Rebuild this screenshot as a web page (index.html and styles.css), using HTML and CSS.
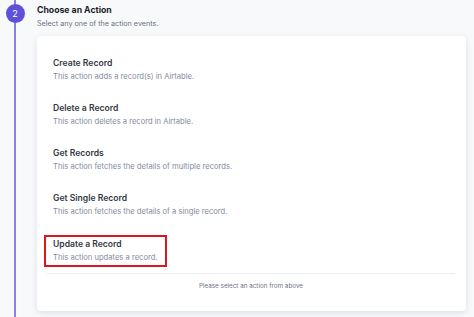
FILE: index.html
```html
<!DOCTYPE html>
<html>
<head>
<meta charset="utf-8">
<link rel="stylesheet" href="styles.css">
</head>
<body>
<div class="step">
  <div class="rail"><div class="badge">2</div></div>
  <div class="content">
    <h2 class="heading">Choose an Action</h2>
    <p class="sub">Select any one of the action events.</p>
    <div class="card">
      <ul class="actions">
        <li class="action"><span class="a-title">Create Record</span><span class="a-desc">This action adds a record(s) in Airtable.</span></li>
        <li class="action"><span class="a-title">Delete a Record</span><span class="a-desc">This action deletes a record in Airtable.</span></li>
        <li class="action"><span class="a-title">Get Records</span><span class="a-desc">This action fetches the details of multiple records.</span></li>
        <li class="action"><span class="a-title">Get Single Record</span><span class="a-desc">This action fetches the details of a single record.</span></li>
        <li class="action selected"><span class="a-title">Update a Record</span><span class="a-desc">This action updates a record.</span></li>
      </ul>
      <div class="footer">Please select an action from above</div>
    </div>
  </div>
</div>
</body>
</html>
```

FILE: styles.css
```css
html, body {
  margin: 0;
  padding: 0;
  background: #f8f9fb;
  font-family: Inter, "Noto Sans", sans-serif;
}
.step {
  display: flex;
  min-height: 317px;
}
.rail {
  width: 30px;
  flex: none;
  display: flex;
  flex-direction: column;
  align-items: center;
  background: linear-gradient(#8c80e4, #8c80e4) center / 2px 100% no-repeat;
}
.badge {
  margin-top: 4px;
  width: 19px;
  height: 19px;
  border-radius: 50%;
  background: #5f50d8;
  color: #fff;
  font-size: 9px;
  line-height: 19px;
  text-align: center;
}
.content {
  flex: 1;
  margin-left: 7px;
  margin-right: 8px;
}
.heading {
  margin: 4px 0 0;
  font-size: 8.7px;
  line-height: 13px;
  font-weight: 700;
  color: #1a1e28;
}
.sub {
  margin: 1px 0 0;
  font-size: 7.2px;
  line-height: 12px;
  color: #6b7080;
}
.card {
  margin-top: 6px;
  background: #fff;
  border-radius: 4px;
  box-shadow: 0 2px 6px rgba(30, 40, 60, 0.12);
}
.actions {
  list-style: none;
  margin: 0;
  padding: 17.5px 7px 6px;
  display: flex;
  flex-direction: column;
  align-items: flex-start;
  gap: 13.25px;
}
.action {
  display: flex;
  flex-direction: column;
  padding: 1px 7px;
  border: 2px solid transparent;
}
.action.selected {
  border-color: #e0141e;
}
.a-title {
  font-size: 8.6px;
  line-height: 13px;
  font-weight: 600;
  color: #343844;
}
.a-desc {
  margin-top: 1px;
  font-size: 7.6px;
  line-height: 12px;
  color: #858ba0;
}
.footer {
  margin: 0 11px 0 10px;
  border-top: 1px solid #eceef2;
  padding: 7px 0 19px;
  font-size: 6.3px;
  line-height: 11px;
  text-align: center;
  color: #6f7382;
}
```
